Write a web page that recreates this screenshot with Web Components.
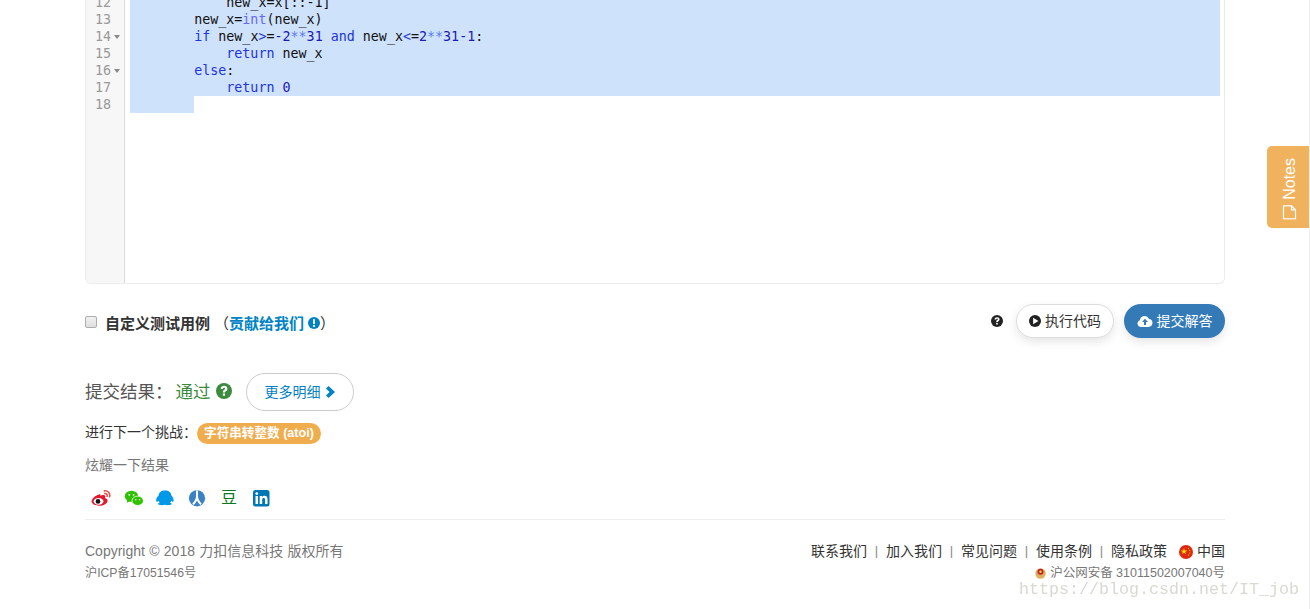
<!DOCTYPE html>
<html lang="zh">
<head>
<meta charset="utf-8">
<title>Reverse Integer</title>
<style>
    html, body { margin: 0; height: 100%; overflow: hidden; background: #fff; }
    body {
        font-family: "Liberation Sans", "Noto Sans CJK SC", sans-serif;
        font-size: 14px;
        color: #333;
        box-shadow: inset -1px 0 0 #f1f1f1;
    }
    #page { width: 1140px; margin: -6px auto 0; }
</style>
</head>
<body>
<div id="page">
    <code-editor></code-editor>
    <run-bar></run-bar>
    <submit-result></submit-result>
    <share-row></share-row>
    <site-footer></site-footer>
</div>
<notes-tab></notes-tab>
<water-mark>https://blog.csdn.net/IT_job</water-mark>

<script>
const ICONS = {
    question: '<circle cx="8" cy="8" r="7"/><path d="M5.100 6.200C5.300 4.500 6.500 3.500 8.100 3.500c1.700 0 2.900 1.100 2.900 2.500 0 2.200-2.100 2-2.100 3.300H7c0-2.500 2-2.400 2-3.300 0-.5-.4-.8-.9-.8s-.9.300-1 1z" fill="#fff"/><rect x="7" y="10.200" width="1.900" height="1.900" fill="#fff"/>',
    info: '<circle cx="8" cy="8" r="7"/><rect x="6.900" y="3.300" width="2.200" height="6" rx=".5" fill="#fff"/><rect x="6.900" y="10.300" width="2.200" height="2.200" fill="#fff"/>',
    play: '<circle cx="8" cy="8" r="7"/><path d="M5.800 4.300 12 8l-6.200 3.700z" fill="#fff"/>',
    cloud: '<path d="M4.200 14C2 14 .5 12.400.5 10.500c0-1.600 1-2.900 2.400-3.300C3.100 4.800 5 3 7.500 3c2 0 3.700 1.200 4.400 3 2.100 0 3.600 1.700 3.600 3.800 0 2.300-1.700 4.200-3.900 4.200z"/><path d="M8 5.800 11 9H9v3H7V9H5z" fill="#337ab7"/>'
};

function icon(name, size, color) {
    const box = name === 'cloud' ? '0 0 16 16' : '1 1 14 14';
    return `<svg width="${size}" height="${size}" viewBox="${box}" fill="${color}" style="display:block;flex:none">${ICONS[name]}</svg>`;
}

class CodeEditor extends HTMLElement {
    connectedCallback() {
        this.attachShadow({ mode: 'open' });
        const numbers = [12, 13, 14, 15, 16, 17, 18];
        this.shadowRoot.innerHTML = `
            <style>
                :host {
                    display: grid;
                    grid-template-columns: 39px 1fr;
                    height: 289px;
                    border: 1px solid #ececec;
                    border-top: 0;
                    border-radius: 0 0 6px 6px;
                    overflow: hidden;
                    font: 13.33px/17px "DejaVu Sans Mono", monospace;
                    color: #111;
                }
                .gutter { background: #f7f7f7; border-right: 1px solid #dadada; color: #999; }
                .num { display: flex; height: 17px; align-items: center; justify-content: flex-end; padding-right: 13px; position: relative; }
                .fold::after {
                    content: ""; position: absolute; right: 4px; top: 7px;
                    border: 3px solid transparent; border-top: 4px solid #888; border-bottom: 0;
                }
                .code { padding: 0 4px 0 5px; }
                .line { height: 17px; white-space: pre; background: #cee2fb; }
                .last { width: 64px; }
                .k { color: #2233e0; }
                .b { color: #6a6af0; }
                .n { color: #1a1ab8; }
                .o { color: #5a7af5; }
            </style>
            <div class="gutter">
                ${numbers.map(n => `<div class="num ${n === 14 || n === 16 ? 'fold' : ''}">${n}</div>`).join('')}
            </div>
            <div class="code">
                <div class="line">            new_x=x[::-1]</div>
                <div class="line">        new_x=<span class="b">int</span>(new_x)</div>
                <div class="line">        <span class="k">if</span> new_x<span class="k">&gt;</span>=<span class="n">-2</span><span class="o">**</span><span class="n">31</span> <span class="k">and</span> new_x<span class="k">&lt;</span>=<span class="n">2</span><span class="o">**</span><span class="n">31-1</span>:</div>
                <div class="line">            <span class="k">return</span> new_x</div>
                <div class="line">        <span class="k">else</span>:</div>
                <div class="line">            <span class="k">return</span> <span class="n">0</span></div>
                <div class="line last"></div>
            </div>
        `;
    }
}

class RunBar extends HTMLElement {
    connectedCallback() {
        this.attachShadow({ mode: 'open' });
        this.shadowRoot.innerHTML = `
            <style>
                :host { display: flex; align-items: center; justify-content: space-between; margin-top: 20px; height: 34px; }
                .test { display: flex; align-items: center; font-size: 15px; margin-top: 3px; }
                .box {
                    width: 10px; height: 10px; border: 1px solid #adadad; border-radius: 2px;
                    background: linear-gradient(#f1f1f1, #dedede); margin-right: 8px; margin-top: -1px;
                }
                b { font-weight: 700; color: #333; }
                .paren { display: flex; align-items: center; margin-left: 4px; }
                a { color: #0083c4; font-weight: 700; text-decoration: none; display: inline-flex; align-items: center; gap: 4px; }
                .actions { display: flex; align-items: center; }
                .btn {
                    display: flex; align-items: center; justify-content: center; gap: 4px;
                    box-sizing: border-box; height: 34px; border-radius: 17px; font-size: 14px;
                    box-shadow: 0 4px 10px rgba(0,0,0,.1);
                }
                .btn span { margin-bottom: 2px; }
                .run { width: 98px; border: 1px solid #ddd; background: #fff; color: #333; margin: 0 10px 0 13px; }
                .submit { width: 101px; background: #337ab7; color: #fff; }
            </style>
            <div class="test">
                <span class="box"></span><b>自定义测试用例</b>
                <span class="paren">（<a>贡献给我们 ${icon('info', 12, '#0083c4')}</a>）</span>
            </div>
            <div class="actions">
                ${icon('question', 12, '#222')}
                <div class="btn run">${icon('play', 12, '#222')}<span>执行代码</span></div>
                <div class="btn submit">${icon('cloud', 16, '#fff')}<span>提交解答</span></div>
            </div>
        `;
    }
}

class SubmitResult extends HTMLElement {
    connectedCallback() {
        this.attachShadow({ mode: 'open' });
        this.shadowRoot.innerHTML = `
            <style>
                :host { display: block; margin-top: 35px; }
                .result { display: flex; align-items: center; height: 38px; font-size: 17.500px; color: #555; }
                .label { display: flex; margin-bottom: 4px; }
                .ok { color: #3c8a3f; margin-left: 3px; margin-right: 5px; }
                .tick { margin-bottom: 2px; }
                .more {
                    display: flex; align-items: center; justify-content: center; gap: 5px;
                    box-sizing: border-box; width: 108px; height: 38px; margin-left: 14px;
                    border: 1px solid #ccc; border-radius: 19px; font-size: 14px; color: #0083c4;
                }
                .more span { margin-bottom: 3px; }
                .next { display: flex; align-items: center; height: 21px; margin-top: 12px; color: #333; }
                .next span:first-child { margin-bottom: 5px; }
                .badge {
                    display: block; width: 124px; height: 21px; line-height: 20px; text-align: center;
                    border-radius: 11px; background: #f0ad4e; color: #fff; font-size: 12.600px; font-weight: 700;
                }
            </style>
            <div class="result">
                <span class="label">提交结果：<span class="ok">通过</span></span>
                <span class="tick">${icon('question', 16, '#3c8a3f')}</span>
                <div class="more">
                    <span>更多明细</span>
                    <svg width="9" height="12" viewBox="0 0 9 12" fill="#0083c4" style="display:block">
                        <path d="M2.500 0 9 6l-6.500 6L0 9.500 3.500 6 0 2.500z"/>
                    </svg>
                </div>
            </div>
            <div class="next"><span>进行下一个挑战：</span><span class="badge">字符串转整数 (atoi)</span></div>
        `;
    }
}

class ShareRow extends HTMLElement {
    connectedCallback() {
        this.attachShadow({ mode: 'open' });
        this.shadowRoot.innerHTML = `
            <style>
                :host { display: block; margin-top: 11px; border-bottom: 1px solid #eee; padding-bottom: 11px; color: #777; }
                .title { height: 20px; line-height: 20px; }
                .icons { display: flex; gap: 12px; margin-top: 13px; padding-left: 6px; height: 20px; align-items: center; }
                .icons > * { width: 20px; height: 20px; flex: none; display: block; text-align: center; }
                .dou { color: #0a7a1e; font-size: 16px; line-height: 20px; }
            </style>
            <div class="title">炫耀一下结果</div>
            <div class="icons">
                <svg viewBox="1 1 18 18">
                    <path d="M8.200 6.800C4.600 8 1.500 10.600 1.500 13c0 2.400 3.200 4 6.700 4 4.200 0 7.700-2.300 7.700-4.600 0-1.700-1.800-2.200-2.300-2.400.4-1.100.4-2-.4-2.500-1-.6-2.700-.2-3.900.4.300-1.100 0-1.600-1.100-1.100z" fill="#e6162d"/>
                    <ellipse cx="7.800" cy="13" rx="4.400" ry="3.100" fill="#fff"/>
                    <circle cx="7.300" cy="13.100" r="2.100" fill="#111"/>
                    <path d="M13 3.600c3-.5 5.600 2 4.700 5.200M13.400 6c1.500-.2 2.500 1 2.100 2.500" fill="none" stroke="#e8504a" stroke-width="1.400" stroke-linecap="round"/>
                </svg>
                <svg viewBox="-1 0 20 20">
                    <ellipse cx="7.500" cy="8.300" rx="6.700" ry="5.600" fill="#2dc100"/>
                    <path d="M3.500 12l-.8 2.800 3.300-1.600z" fill="#2dc100"/>
                    <circle cx="5.300" cy="6.800" r=".9" fill="#fff"/><circle cx="9.600" cy="6.800" r=".9" fill="#fff"/>
                    <ellipse cx="13.700" cy="12.800" rx="5.700" ry="4.700" fill="#2dc100" stroke="#fff" stroke-width=".8"/>
                    <circle cx="11.800" cy="11.800" r=".7" fill="#fff"/><circle cx="15.600" cy="11.800" r=".7" fill="#fff"/>
                </svg>
                <svg viewBox="0 0 20 20">
                    <g transform="translate(10 .5) scale(1.300 .95) translate(-10 0)">
                        <path d="M10 2c3 0 4.700 2.200 4.800 5 1 1 1.800 3.200 1.800 5.300 0 1.400-.5 2-1 1.600l-.7-1c-.2.900-.6 1.600-1.200 2.200 1 .3 1.500.800 1.500 1.300 0 .7-1.300 1.100-3 1.100-1 0-1.800-.2-2.300-.5-.5.300-1.300.5-2.300.5-1.700 0-3-.4-3-1.100 0-.5.500-1 1.500-1.300-.6-.6-1-1.300-1.200-2.200l-.7 1c-.5.400-1-.2-1-1.600C3.200 10.200 4.200 8 5.200 7 5.300 4.200 7 2 10 2z" fill="#0098e8"/>
                    </g>
                </svg>
                <svg viewBox="0 0 20 20">
                    <circle cx="10" cy="10.300" r="8.100" fill="#3b82c4"/>
                    <path d="M10 2.500v6M10 8c0 3.500-1.700 6-4 8.300M10 8c0 3.500 1.700 6 4 8.300" fill="none" stroke="#fff" stroke-width="2"/>
                </svg>
                <span class="dou">豆</span>
                <svg viewBox="0 0 20 20">
                    <rect x="2" y="2" width="16.500" height="16.500" rx="2.500" fill="#0077b5"/>
                    <rect x="4.500" y="8" width="2.500" height="8" fill="#fff"/><circle cx="5.750" cy="5.600" r="1.400" fill="#fff"/>
                    <path d="M8.700 8h2.400v1.200c.5-.9 1.400-1.400 2.500-1.400 2 0 2.900 1.200 2.900 3.300V16H14v-4.500c0-1-.4-1.600-1.300-1.600-1 0-1.500.7-1.500 1.700V16H8.700z" fill="#fff"/>
                </svg>
            </div>
        `;
    }
}

class SiteFooter extends HTMLElement {
    connectedCallback() {
        this.attachShadow({ mode: 'open' });
        const links = ['联系我们', '加入我们', '常见问题', '使用条例', '隐私政策'];
        this.shadowRoot.innerHTML = `
            <style>
                :host { display: flex; justify-content: space-between; margin-top: 20px; }
                .left { color: #777; }
                .copy { height: 22px; line-height: 22px; word-spacing: .4px; }
                .small { font-size: 12.500px; height: 22px; line-height: 22px; color: #777; }
                .left .small { font-size: 12.200px; }
                .nav { display: flex; height: 22px; line-height: 22px; align-items: center; color: #333; justify-content: flex-end; }
                .sep { margin: 0 7.800px; color: #888; font-size: 13px; }
                .cn { display: flex; align-items: center; gap: 4px; margin-left: 12px; }
                .right .small { display: flex; align-items: center; justify-content: flex-end; gap: 4px; }
            </style>
            <div class="left">
                <div class="copy">Copyright © 2018 力扣信息科技 版权所有</div>
                <div class="small">沪ICP备17051546号</div>
            </div>
            <div class="right">
                <div class="nav">
                    ${links.map(l => `<span>${l}</span>`).join('<span class="sep">|</span>')}
                    <span class="cn">
                        <svg width="14" height="14" viewBox="0 0 14 14" style="display:block;margin-top:1px">
                            <circle cx="7" cy="7" r="7" fill="#de2910"/>
                            <path d="M5 3l.8 2.400h2.500l-2 1.500.8 2.400-2.100-1.500-2 1.500.8-2.400-2-1.500h2.500z" fill="#ffde00"/>
                            <circle cx="9.500" cy="3.500" r=".6" fill="#ffde00"/><circle cx="10.800" cy="5.500" r=".6" fill="#ffde00"/>
                            <circle cx="10.800" cy="8" r=".6" fill="#ffde00"/><circle cx="9.500" cy="10" r=".6" fill="#ffde00"/>
                        </svg>中国
                    </span>
                </div>
                <div class="small">
                    <svg width="11" height="12" viewBox="0 0 11 12" style="display:block">
                        <circle cx="5.500" cy="6.500" r="5.200" fill="#e0b060"/>
                        <circle cx="5.500" cy="4.800" r="3" fill="#b8242a"/>
                        <circle cx="5.500" cy="4.800" r="1.200" fill="#f4d24a"/>
                    </svg>
                    <span>沪公网安备 31011502007040号</span>
                </div>
            </div>
        `;
    }
}

class NotesTab extends HTMLElement {
    connectedCallback() {
        this.attachShadow({ mode: 'open' });
        this.shadowRoot.innerHTML = `
            <style>
                :host {
                    position: fixed; top: 146px; right: 1px; width: 42px; height: 82px;
                    display: flex; align-items: center; justify-content: center;
                    background: #f0b25c; border-radius: 5px 0 0 5px; color: #fff;
                    box-sizing: border-box; padding: 4px 0 0 3px;
                }
                .inner {
                    display: flex; align-items: center; gap: 5px;
                    writing-mode: vertical-rl; transform: rotate(180deg);
                    font-size: 16px;
                }
                svg { transform: rotate(180deg); display: block; }
            </style>
            <div class="inner">
                <svg width="15" height="15" viewBox="0 0 15 15" fill="none" stroke="#fff" stroke-width="1.200">
                    <path d="M1.500 1h8l4 4v9h-12zM9.500 1v4h4"/>
                </svg>
                <span>Notes</span>
            </div>
        `;
    }
}

class WaterMark extends HTMLElement {
    connectedCallback() {
        this.attachShadow({ mode: 'open' });
        this.shadowRoot.innerHTML = `
            <style>
                :host {
                    position: fixed; left: 1019px; top: 580px;
                    font: 16.670px/20px "Liberation Mono", monospace;
                    color: #d9d9d2; white-space: nowrap;
                }
            </style>
            <slot></slot>
        `;
    }
}

customElements.define('code-editor', CodeEditor);
customElements.define('run-bar', RunBar);
customElements.define('submit-result', SubmitResult);
customElements.define('share-row', ShareRow);
customElements.define('site-footer', SiteFooter);
customElements.define('notes-tab', NotesTab);
customElements.define('water-mark', WaterMark);
</script>
</body>
</html>
